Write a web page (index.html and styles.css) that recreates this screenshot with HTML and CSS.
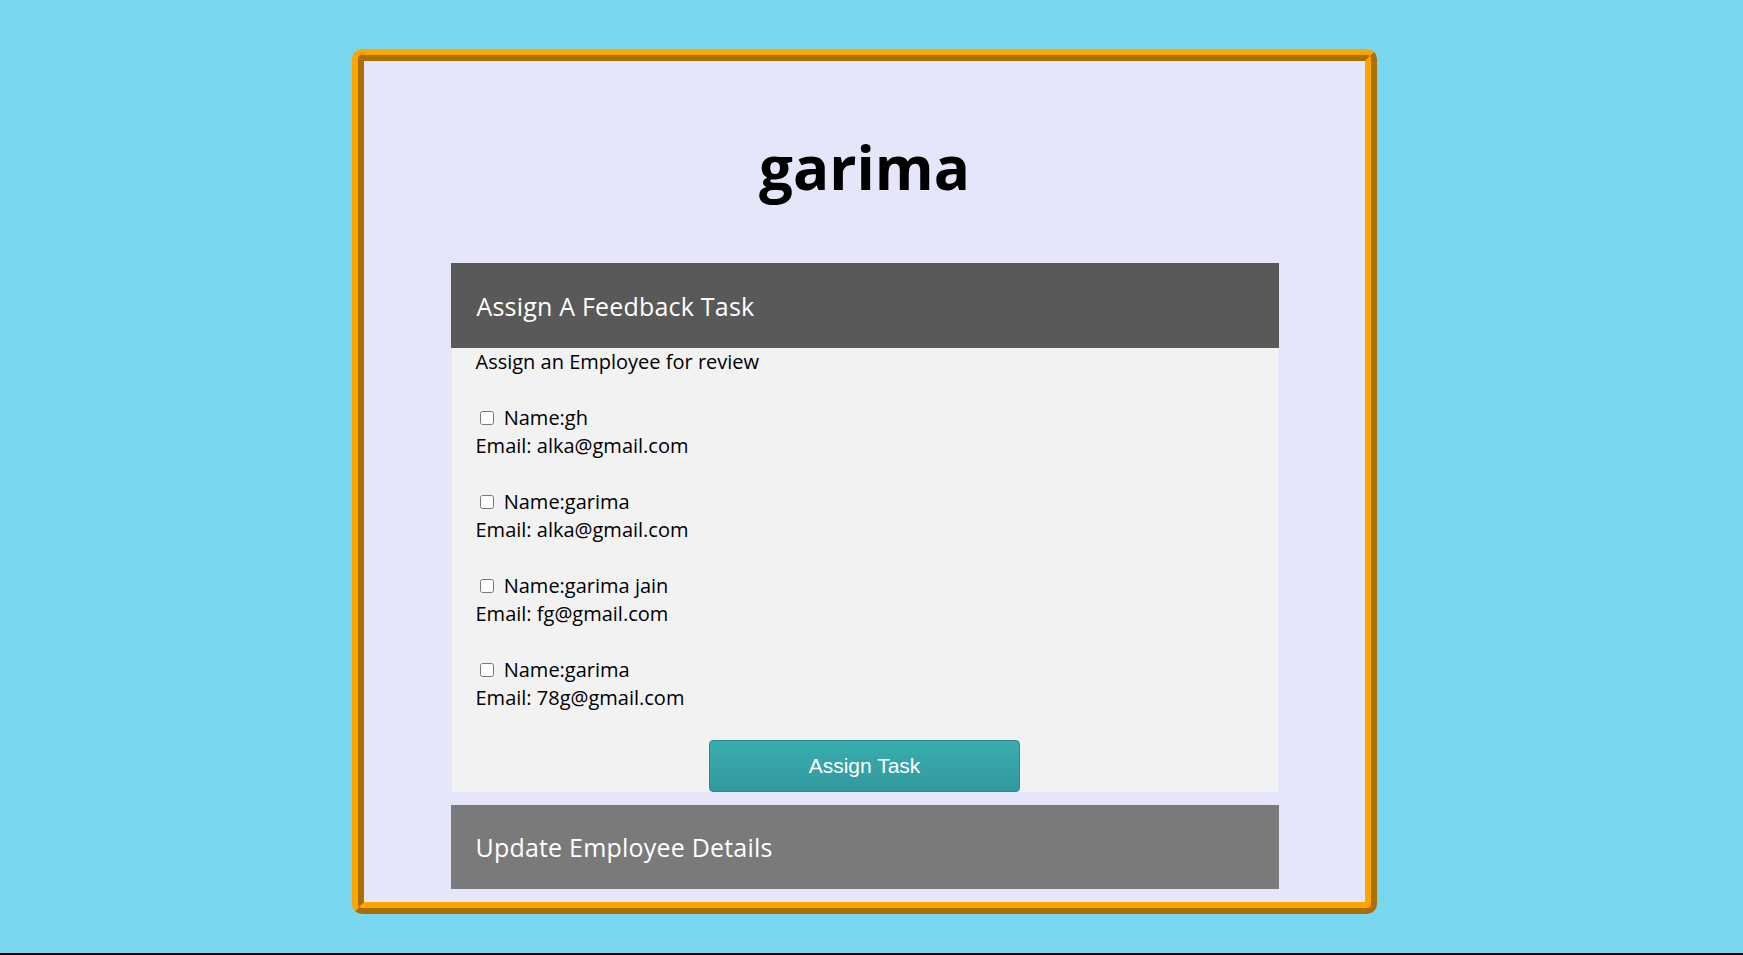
FILE: index.html
```html
<!DOCTYPE html>
<html lang="en">
<head>
<meta charset="utf-8">
<title>garima</title>
<link rel="stylesheet" href="styles.css">
</head>
<body>
<div class="page">
  <div class="frame">
    <h1 class="title">garima</h1>
    <section class="panel">
      <div class="panel-head">Assign A Feedback Task</div>
      <form class="panel-body">
        Assign an Employee for review<br><br>
        <input type="checkbox" name="emp" value="1"> Name:gh<br>
        Email: alka@gmail.com<br><br>
        <input type="checkbox" name="emp" value="2"> Name:garima<br>
        Email: alka@gmail.com<br><br>
        <input type="checkbox" name="emp" value="3"> Name:garima jain<br>
        Email: fg@gmail.com<br><br>
        <input type="checkbox" name="emp" value="4"> Name:garima<br>
        Email: 78g@gmail.com
        <div class="actions"><button type="button" class="btn">Assign Task</button></div>
      </form>
    </section>
    <section class="panel panel-alt">
      <div class="panel-head">Update Employee Details</div>
    </section>
  </div>
  <div class="bottom-bar"></div>
</div>
</body>
</html>
```

FILE: styles.css
```css
html, body {
  margin: 0;
  padding: 0;
  background: #79d7ef;
  height: 100%;
  overflow: hidden;
}

.page {
  padding-top: 49px;
  font-family: "Open Sans", "DejaVu Sans", sans-serif;
}

.frame {
  width: 1001px;
  margin-left: 352px;
  border: 12px ridge #ffa500;
  border-radius: 10px;
  background: #e6e6fa;
  padding: 66px 0 13px;
  box-sizing: content-box;
}

.title {
  margin: 0 0 56px;
  text-align: center;
  font-size: 60px;
  line-height: 80px;
  font-weight: 700;
  color: #000;
}

.panel {
  width: 828px;
  margin: 0 auto;
}

.panel-head {
  background: #595959;
  color: #fff;
  height: 85px;
  display: flex;
  align-items: center;
  padding-left: 26px;
  font-size: 25px;
  letter-spacing: 0.2px;
}

.panel-body {
  margin: 0 1px;
  background: #f2f2f2;
  padding: 0 0 0 24px;
  font-size: 20px;
  line-height: 28px;
  color: #000;
}

.panel-body input[type="checkbox"] {
  width: 14px;
  height: 14px;
  margin: 0 5px 0 4px;
  vertical-align: 0;
}

.actions {
  padding-top: 28px;
  display: flex;
  justify-content: center;
  margin-left: -24px;
}

.btn {
  width: 311px;
  height: 52px;
  border: 1px solid #2a8a8f;
  border-radius: 4px;
  background: linear-gradient(#39adb1, #32999e);
  color: #fff;
  font-family: "Liberation Sans", Arial, sans-serif;
  font-size: 21px;
  cursor: pointer;
}

.panel-alt {
  margin-top: 13px;
}

.panel-alt .panel-head {
  background: #7a7a7a;
  height: 84px;
  padding-left: 25px;
}

.bottom-bar {
  margin-top: 39px;
  height: 10px;
  background: #000;
}
```
